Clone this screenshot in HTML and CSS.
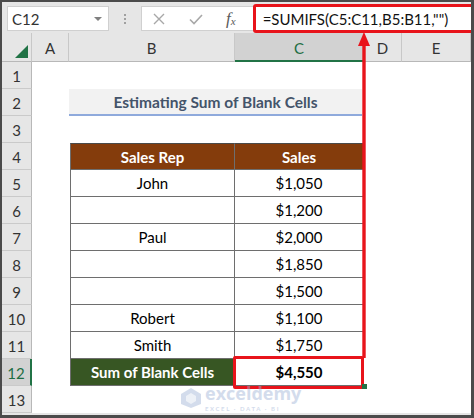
FILE: index.html
```html
<!DOCTYPE html>
<html>
<head>
<meta charset="utf-8">
<link rel="stylesheet" href="styles.css">
</head>
<body>
<div class="app">
  <div class="toolbar">
    <div class="namebox">
      <span>C12</span>
      <svg class="dd" width="8" height="5" viewBox="0 0 8 5"><path d="M0 0 L8 0 L4 4 Z" fill="#808080"/></svg>
    </div>
    <div class="grip"><i></i><i></i><i></i></div>
    <div class="fbar">
      <div class="fbtns">
        <svg width="14" height="14" viewBox="0 0 14 14"><path d="M2 2 L12 12 M12 2 L2 12" stroke="#a8a8a8" stroke-width="1.4" fill="none"/></svg>
        <svg width="16" height="14" viewBox="0 0 16 14"><path d="M2 7.5 L6 11.5 L14 3" stroke="#a8a8a8" stroke-width="1.6" fill="none"/></svg>
        <span class="fx">f<sub>x</sub></span>
      </div>
      <div class="formula">=SUMIFS(C5:C11,B5:B11,"")</div>
    </div>
  </div>

  <div class="sheet">
    <div class="corner"><svg width="13" height="13" viewBox="0 0 13 13"><path d="M13 0 L13 13 L0 13 Z" fill="#217346"/></svg></div>
    <div class="ch">A</div>
    <div class="ch">B</div>
    <div class="ch sel">C</div>
    <div class="ch">D</div>
    <div class="ch">E</div>

    <div class="rh">1</div><div class="c"></div><div class="c"></div><div class="c"></div><div class="c"></div><div class="c"></div>

    <div class="rh">2</div><div class="c"></div><div class="c title">Estimating Sum of Blank Cells</div><div class="c"></div><div class="c"></div>

    <div class="rh">3</div><div class="c"></div><div class="c"></div><div class="c"></div><div class="c"></div><div class="c"></div>

    <div class="rh">4</div><div class="c"></div><div class="c t tl th tt">Sales Rep</div><div class="c t th tt">Sales</div><div class="c"></div><div class="c"></div>

    <div class="rh">5</div><div class="c"></div><div class="c t tl">John</div><div class="c t">$1,050</div><div class="c"></div><div class="c"></div>
    <div class="rh">6</div><div class="c"></div><div class="c t tl"></div><div class="c t">$1,200</div><div class="c"></div><div class="c"></div>
    <div class="rh">7</div><div class="c"></div><div class="c t tl">Paul</div><div class="c t">$2,000</div><div class="c"></div><div class="c"></div>
    <div class="rh">8</div><div class="c"></div><div class="c t tl"></div><div class="c t">$1,850</div><div class="c"></div><div class="c"></div>
    <div class="rh">9</div><div class="c"></div><div class="c t tl"></div><div class="c t">$1,500</div><div class="c"></div><div class="c"></div>
    <div class="rh">10</div><div class="c"></div><div class="c t tl">Robert</div><div class="c t">$1,100</div><div class="c"></div><div class="c"></div>
    <div class="rh">11</div><div class="c"></div><div class="c t tl">Smith</div><div class="c t">$1,750</div><div class="c"></div><div class="c"></div>

    <div class="rh sel">12</div><div class="c"></div><div class="c t tl total">Sum of Blank Cells</div><div class="c t sum">$4,550</div><div class="c"></div><div class="c"></div>

    <div class="rh">13</div><div class="c"></div><div class="c"></div><div class="c"></div><div class="c"></div><div class="c"></div>
  </div>

  <div class="redbox fbox"></div>
  <div class="redbox cbox"></div>
  <div class="handle"></div>
  <svg class="arrow" width="14" height="326" viewBox="0 0 14 326">
    <path d="M7 0 L13 14 L1 14 Z" fill="#e8141b"/>
    <rect x="5.3" y="12" width="3.4" height="314" fill="#e8141b"/>
  </svg>

  <div class="watermark">
    <svg width="22" height="22" viewBox="0 0 22 22"><path d="M11 1 L21 7 L21 17 L11 21 L1 17 L1 7 Z" fill="#9fb3d6"/><path d="M6 9 L11 6 L16 9 L16 14 L11 17 L6 14 Z" fill="#ffffff" opacity="0.6"/></svg>
    <div class="wm-text">
      <div class="wm-name">exceldemy</div>
      <div class="wm-sub">EXCEL · DATA · BI</div>
    </div>
  </div>
</div>
</body>
</html>
```

FILE: styles.css
```css
html, body {
  margin: 0;
  padding: 0;
  background: #4b4b4b;
}
body {
  width: 474px;
  height: 418px;
  overflow: hidden;
  font-family: "Lato", "Liberation Sans", sans-serif;
}
.app {
  position: relative;
  margin: 2px 3px 0 2px;
  width: 469px;
  height: 413px;
  background: #e6e6e6;
  overflow: hidden;
}
.toolbar {
  height: 31px;
  display: flex;
  align-items: flex-start;
  padding-top: 4px;
  box-sizing: border-box;
}
.namebox {
  margin-left: 5px;
  width: 102px;
  height: 25px;
  background: #fff;
  border: 1px solid #d0d0d0;
  box-sizing: border-box;
  display: flex;
  align-items: center;
  justify-content: space-between;
  padding: 0 6px 0 4px;
  font-size: 15px;
  color: #333;
}
.namebox .dd { margin-top: 1px; }
.grip {
  width: 32px;
  height: 25px;
  display: flex;
  flex-direction: column;
  align-items: center;
  justify-content: center;
  gap: 2px;
}
.grip i {
  display: block;
  width: 2px;
  height: 2px;
  background: #a0a0a0;
}
.fbar {
  flex: 1;
  height: 25px;
  background: #fff;
  border: 1px solid #d0d0d0;
  border-right: none;
  box-sizing: border-box;
  display: flex;
  align-items: center;
}
.fbtns {
  display: flex;
  align-items: center;
  gap: 22px;
  padding-left: 10px;
}
.fx {
  font-family: "Liberation Serif", serif;
  font-style: italic;
  font-size: 17px;
  color: #5a5a5a;
  line-height: 1;
}
.fx sub {
  font-size: 11px;
  vertical-align: -1px;
}
.formula {
  margin-left: 27px;
  font-size: 15px;
  color: #111;
  white-space: nowrap;
}
.sheet {
  display: grid;
  grid-template-columns: 30px 37px 166px 129px 38px 69px;
  grid-template-rows: 29px repeat(13, 27px);
  background: #fff;
}
.corner {
  background: #e6e6e6;
  border-right: 1px solid #c8c8c8;
  border-bottom: 1px solid #b8b8b8;
  box-sizing: border-box;
  display: flex;
  align-items: flex-end;
  justify-content: flex-end;
  padding: 0 3px 3px 0;
}
.ch {
  background: #e6e6e6;
  border-right: 1px solid #c8c8c8;
  border-bottom: 1px solid #b8b8b8;
  box-sizing: border-box;
  display: flex;
  align-items: center;
  justify-content: center;
  font-size: 15px;
  color: #333;
  padding-top: 2px;
}
.ch.sel {
  background: #d2d2d2;
  color: #1e6e44;
  border-bottom: 2px solid #217346;
}
.rh {
  background: #e6e6e6;
  border-right: 1px solid #b8b8b8;
  border-bottom: 1px solid #cacaca;
  box-sizing: border-box;
  display: flex;
  align-items: center;
  justify-content: center;
  font-size: 15px;
  color: #333;
  padding-top: 1px;
}
.rh.sel {
  background: #d2d2d2;
  color: #1e6e44;
  border-right: 2px solid #217346;
}
.c {
  box-sizing: border-box;
  display: flex;
  align-items: center;
  justify-content: center;
  font-size: 15px;
  color: #000;
  white-space: nowrap;
}
.title {
  grid-column: span 2;
  margin-right: 2px;
  background: #f2f2f2;
  border-bottom: 2px solid #8faadc;
  font-weight: bold;
  font-size: 15.5px;
  color: #44546a;
}
.t {
  border-right: 1px solid #6e6e6e;
  border-bottom: 1px solid #6e6e6e;
}
.tl { border-left: 1px solid #6e6e6e; margin-left: 1px; }
.tt { border-top: 1px solid #4a4a4a; }
.th {
  background: #843c0c;
  color: #fff;
  font-weight: bold;
}
.total {
  background: #375623;
  color: #fff;
  font-weight: bold;
}
.sum {
  font-weight: bold;
}
.redbox {
  position: absolute;
  border: 3px solid #e8141b;
  box-sizing: border-box;
  border-radius: 3px;
}
.fbox {
  left: 251px;
  top: 2px;
  width: 222px;
  height: 29px;
}
.cbox {
  left: 231px;
  top: 354px;
  width: 131px;
  height: 33px;
  border-radius: 2px;
}
.handle {
  position: absolute;
  left: 360px;
  top: 382px;
  width: 5px;
  height: 5px;
  background: #217346;
}
.arrow {
  position: absolute;
  left: 355px;
  top: 30px;
}
.watermark {
  position: absolute;
  left: 178px;
  top: 381px;
  display: flex;
  align-items: center;
  gap: 3px;
  opacity: 0.45;
}
.wm-name {
  font-family: "Open Sans", sans-serif;
  font-weight: bold;
  font-size: 18px;
  color: #9fb3d6;
  line-height: 21px;
}
.wm-sub {
  font-size: 6px;
  line-height: 7px;
  letter-spacing: 1.6px;
  color: #9fb3d6;
  font-weight: bold;
  margin-top: 1px;
}
```
